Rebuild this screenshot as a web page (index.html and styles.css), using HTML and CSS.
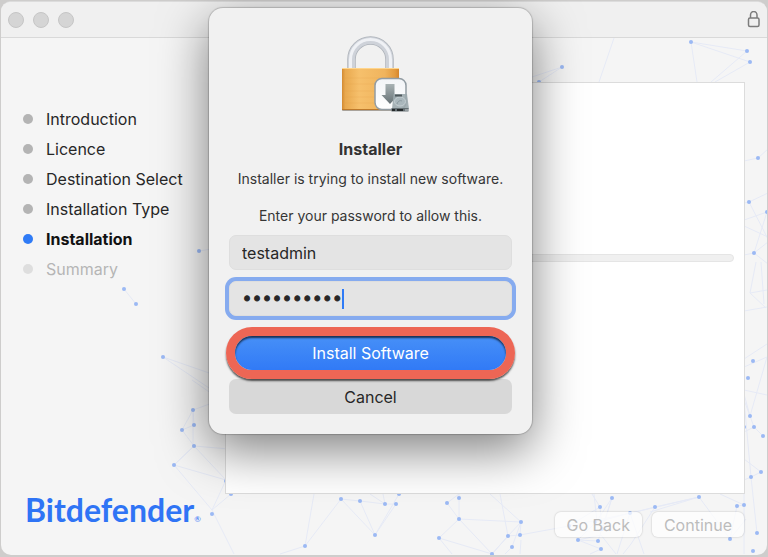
FILE: index.html
```html
<!DOCTYPE html>
<html lang="en">
<head>
<meta charset="utf-8">
<title>Installer</title>
<link rel="stylesheet" href="styles.css">
</head>
<body>
<div class="window">
  <header class="titlebar">
    <div class="lights"><span class="light"></span><span class="light"></span><span class="light"></span></div>
    <svg class="lock" viewBox="0 0 14 18" width="14" height="18" aria-hidden="true"><rect x="1.500" y="7" width="10.500" height="8.500" rx="1.500"/><path d="M3.500 7V4a3.200 3.500 0 0 1 6.500 0v3"/></svg>
  </header>
  <main class="content">
    <svg class="network" viewBox="1 38 766 517" preserveAspectRatio="xMaxYMax slice" aria-hidden="true">
      <path class="links" d="M124 289 136 304M163 357 215 392M163 357 215 375M199 251 230 246M192 380 215 396M193 410 182 430 194 446 174 465 212 510 234 554M193 410V446M182 430 194 425 193 410 215 402M194 446 240 450M194 446 226 480 174 465 194 446M226 480 212 510 231 494M532 77 562 67 539 82M614 38 599 82M691 42 697 82M691 42 747 51 711 82M691 42 750 62 715 82M744 161 758 158 768 149M744 203 749 202 768 193M749 202 768 239M744 220 767 212 754 253 744 255M744 226 768 237M768 264 754 253 768 242M756 262 750 293 766 308M761 262 764 304M750 293 767 290M744 311 767 307M744 359 767 344M744 367 767 357 750 416M744 390 767 395M744 394 750 416M314 494 305 546 341 499 360 501 385 504 396 504 375 535 341 499M305 546 280 554M360 501 375 535 399 494M370 494 385 504 383 494M459 494 447 503 459 519V494M459 519 521 522 490 494M459 519 439 538 492 554 459 519M439 538 452 554M492 554 508 536 521 522 512 547 505 554M492 554 508 536 520 535 569 526 631 513 699 497 655 507 631 513M500 494 508 536M520 535 521 522M592 494 600 507 602 529 612 498 596 522 578 540 598 541 612 498M594 494 597 522 630 513M569 526 600 507M578 540 601 549 590 554M578 540 601 535 616 554M630 513 617 554M630 513 644 554M655 507 631 544 623 554M699 497 730 539 737 506 744 505M699 497 650 512M720 494 744 505M744 554 744 494M744 400 750 416 754 427 763 436M754 427 744 432M744 400 751 477 757 533M744 480 751 477 761 472 744 459M730 539 746 519M520 554 521 540"/>
      <g class="nodes"><circle cx="124" cy="289" r="2"/><circle cx="136" cy="304" r="2"/><circle cx="163" cy="357" r="2"/><circle cx="199" cy="251" r="2"/><circle cx="193" cy="410" r="2"/><circle cx="194" cy="425" r="2"/><circle cx="182" cy="430" r="2"/><circle cx="194" cy="446" r="2"/><circle cx="174" cy="465" r="2"/><circle cx="226" cy="481" r="2"/><circle cx="231" cy="494" r="2"/><circle cx="212" cy="514" r="2"/><circle cx="539" cy="82" r="2"/><circle cx="562" cy="67" r="2"/><circle cx="691" cy="42" r="2"/><circle cx="747" cy="51" r="2"/><circle cx="750" cy="62" r="2"/><circle cx="758" cy="158" r="2"/><circle cx="749" cy="202" r="2"/><circle cx="767" cy="212" r="2"/><circle cx="754" cy="253" r="2"/><circle cx="753" cy="361" r="2"/><circle cx="748" cy="378" r="2"/><circle cx="750" cy="416" r="2"/><circle cx="754" cy="427" r="2"/><circle cx="763" cy="436" r="2"/><circle cx="761" cy="472" r="2"/><circle cx="751" cy="477" r="2"/><circle cx="744" cy="427" r="2"/><circle cx="305" cy="546" r="2"/><circle cx="341" cy="499" r="2"/><circle cx="360" cy="501" r="2"/><circle cx="385" cy="504" r="2"/><circle cx="396" cy="504" r="2"/><circle cx="399" cy="494" r="2"/><circle cx="375" cy="535" r="2"/><circle cx="447" cy="503" r="2"/><circle cx="459" cy="498" r="2"/><circle cx="459" cy="519" r="2"/><circle cx="439" cy="538" r="2"/><circle cx="492" cy="554" r="2"/><circle cx="508" cy="536" r="2"/><circle cx="520" cy="535" r="2"/><circle cx="521" cy="522" r="2"/><circle cx="512" cy="547" r="2"/><circle cx="600" cy="507" r="2"/><circle cx="612" cy="498" r="2"/><circle cx="569" cy="526" r="2"/><circle cx="595" cy="522" r="2"/><circle cx="602" cy="529" r="2"/><circle cx="578" cy="540" r="2"/><circle cx="598" cy="541" r="2"/><circle cx="601" cy="549" r="2"/><circle cx="630" cy="513" r="2"/><circle cx="655" cy="507" r="2"/><circle cx="699" cy="497" r="2"/><circle cx="737" cy="506" r="2"/><circle cx="744" cy="505" r="2"/><circle cx="730" cy="539" r="2"/><circle cx="757" cy="533" r="2"/><circle cx="753" cy="551" r="2"/></g>
    </svg>
    <aside class="sidebar">
      <ol class="steps">
        <li>Introduction</li>
        <li>Licence</li>
        <li>Destination Select</li>
        <li>Installation Type</li>
        <li class="current" aria-current="step">Installation</li>
        <li class="pending">Summary</li>
      </ol>
      <div class="brand">Bitdefender<span class="reg">®</span></div>
    </aside>
    <section class="main">
      <div class="panel"><div class="progress" role="progressbar" aria-label="Installation progress"></div></div>
      <footer class="actions">
        <button type="button" disabled>Go Back</button>
        <button type="button" disabled>Continue</button>
      </footer>
    </section>
  </main>
</div>
<form class="dialog" role="dialog" aria-labelledby="dialog-title">
  <svg class="padlock" viewBox="-4 0 90 90" width="90" height="90" aria-hidden="true">
    <defs>
      <linearGradient id="gold"><stop offset="0" stop-color="#d38a32"/><stop offset=".06" stop-color="#e9a94f"/><stop offset=".3" stop-color="#f6c06c"/><stop offset=".75" stop-color="#f0b45d"/><stop offset=".93" stop-color="#e39a3e"/><stop offset="1" stop-color="#d5852b"/></linearGradient>
      <linearGradient id="arrow" x2="0" y2="1"><stop offset="0" stop-color="#a9b3b5"/><stop offset="1" stop-color="#667175"/></linearGradient>
      <linearGradient id="tile" x2="0" y2="1"><stop offset="0" stop-color="#f2f4f7"/><stop offset="1" stop-color="#fff"/></linearGradient>
    </defs>
    <g fill="none"><path d="M21.500 39V29.500a19 19 0 0 1 38 0V39" stroke="#aeb3ba" stroke-width="8.500"/><path d="M21.500 39V29.500a19 19 0 0 1 38 0V39" stroke="#ced2d9" stroke-width="7"/><path d="M20.500 39V29.500a20 20 0 0 1 40 0V39" stroke="#eff1f5" stroke-width="3"/></g>
    <rect x="12" y="79" width="57" height="2" rx="1" fill="#a9a39b"/>
    <rect x="12" y="38" width="57" height="42" rx="1" fill="url(#gold)"/>
    <path d="M12 38.500h57" stroke="#ffd58c"/><path d="M12 79.500h57" stroke="#be7a2b"/>
    <path d="M15 48h52M15 54h52M15 61h52M15 67h52M15 73h52" stroke="#dfa04a" stroke-opacity=".35" stroke-width=".6"/>
    <rect x="45" y="48.500" width="31" height="31" rx="7" fill="url(#tile)" stroke="#929ca3" stroke-width="1.500"/>
    <path d="M55.500 54h9v11h4L60 74l-8.500-9h4z" fill="url(#arrow)"/>
    <path d="M63.500 64h13.500l2 15H62z" fill="#9ba8ad" fill-opacity=".9"/>
    <ellipse cx="70" cy="71.500" rx="5.500" ry="4.500" fill="#aab7bc" stroke="#c3cdd1"/><path d="M67 74c1-3 3-4 5-3" fill="none" stroke="#8a989e"/>
    <path d="M65 65.500h7" stroke="#4e585c" stroke-width="2"/><path d="M61.500 78h17v3.500h-17z" fill="#667074"/><path d="M62 80h3M67 80h6" stroke="#24292b" stroke-width="2"/><path d="M75 80h3" stroke="#c7ced0"/>
  </svg>
  <h1 id="dialog-title">Installer</h1>
  <p>Installer is trying to install new software.</p>
  <p class="prompt">Enter your password to allow this.</p>
  <input class="field" type="text" value="testadmin" aria-label="User name">
  <div class="password">
    <input class="field" type="password" value="abcdefghij" aria-label="Password"><span class="caret"></span>
  </div>
  <div class="highlight"><button class="primary" type="submit">Install Software</button></div>
  <button class="cancel" type="button">Cancel</button>
</form>
</body>
</html>
```
FILE: styles.css
```css
* { box-sizing: border-box; }
body {
  margin: 0;
  min-height: 100vh;
  display: flex;
  padding: 1px 1px 2px;
  position: relative;
  overflow: hidden;
  background: #cecdcc;
  font: 16px/20px Inter, "Liberation Sans", sans-serif;
  color: #272727;
}
button, input { font: inherit; color: inherit; border: 0; margin: 0; }
.window {
  flex: 1;
  display: flex;
  flex-direction: column;
  background: #f5f5f5;
  border-top: 1px solid #dcdcdc;
  border-radius: 10px;
  overflow: hidden;
}
.titlebar {
  height: 36px;
  padding: 0 6px 0 7px;
  display: flex;
  align-items: center;
  justify-content: space-between;
  background: #f0f0f0;
  border-bottom: 1px solid #d9d9d9;
}
.lights { display: flex; gap: 9px; }
.light { width: 16px; height: 16px; border-radius: 50%; background: #d5d5d5; border: 1px solid #c6c6c6; }
.lock { fill: none; stroke: #7c7c7c; stroke-width: 1.5; }
.content { flex: 1; display: flex; position: relative; }
.network { position: absolute; inset: 0; width: 100%; height: 100%; }
.links { fill: none; stroke: #e6eaf6; stroke-width: 1; }
.nodes { fill: #9bb9f4; }
.sidebar {
  position: relative;
  width: 224px;
  display: flex;
  flex-direction: column;
  justify-content: space-between;
  padding: 71px 0 20px 22px;
}
.steps { list-style: none; margin: 0; padding: 0; display: grid; gap: 10px; }
.steps li { display: flex; align-items: center; gap: 13px; white-space: nowrap; }
.steps li::before { content: ""; width: 10px; height: 10px; border-radius: 50%; background: #b4b4b4; }
.steps .current { font-weight: 700; color: #111; }
.steps .current::before { background: #2f7bf6; }
.steps .pending { color: #b5b5b5; }
.steps .pending::before { background: #dedede; }
.brand { padding-left: 2px; font: 700 32px/32px Lato, sans-serif; color: #2f74f5; white-space: nowrap; }
.reg { font-size: 8px; font-weight: 400; }
.main { position: relative; flex: 1; display: flex; flex-direction: column; padding: 44px 22px 18px 0; }
.panel { flex: 1; display: flex; flex-direction: column; padding: 171px 10px 0; background: #fff; border: 1px solid #dcdcdc; }
.progress { height: 8px; border: 1px solid #e5e5e5; border-radius: 4px; background: #f0f0f0; }
.actions { display: flex; justify-content: flex-end; gap: 10px; padding-top: 18px; margin-right: 1px; }
.actions button {
  height: 25px;
  padding: 0 12px;
  border-radius: 6px;
  background: rgba(255, 255, 255, .7);
  box-shadow: 0 0 2px rgba(0, 0, 0, .25);
  color: #bcbcbc;
}
.dialog {
  position: absolute;
  left: 209px;
  top: 8px;
  width: 323px;
  padding: 22px 20px 20px;
  display: flex;
  flex-direction: column;
  align-items: center;
  background: #f1f1f1;
  border-radius: 14px;
  box-shadow: 0 0 1px 1px rgba(0, 0, 0, .18), 0 16px 50px rgba(0, 0, 0, .5);
}
.dialog h1 { margin: 19px 0 10px; font-size: 16px; line-height: 20px; font-weight: 700; color: #333; }
.dialog p { margin: 0; font-size: 14px; line-height: 20px; color: #363636; white-space: nowrap; }
.dialog .prompt { margin: 17px 0 9px; }
.field { width: 100%; height: 35px; padding: 0 12px; border-radius: 7px; background: #e4e4e4; border: 1px solid #dedede; outline: 0; }
.password { position: relative; width: 100%; margin: 11px 0; }
.password .field { display: block; box-shadow: 0 0 0 4px #86abef; font-family: "DejaVu Sans", sans-serif; font-size: 17px; -webkit-text-stroke: 1px #272727; }
.caret { position: absolute; left: 113px; top: 8px; width: 2px; height: 20px; background: #2f7bf6; }
.highlight {
  position: relative;
  z-index: 1;
  align-self: stretch;
  margin: 0 -3px;
  display: flex;
  border: 9px solid #ed6655;
  border-radius: 26px;
  box-shadow: 0 2px 2px rgba(0, 0, 0, .65);
}
.primary {
  flex: 1;
  height: 34px;
  border-radius: 17px;
  background: linear-gradient(#4790f7, #317af6);
  box-shadow: inset 0 2px 2px rgba(0, 0, 0, .65);
  color: #fff;
}
.cancel { width: 100%; height: 35px; border-radius: 7px; background: #d8d8d8; }
```
